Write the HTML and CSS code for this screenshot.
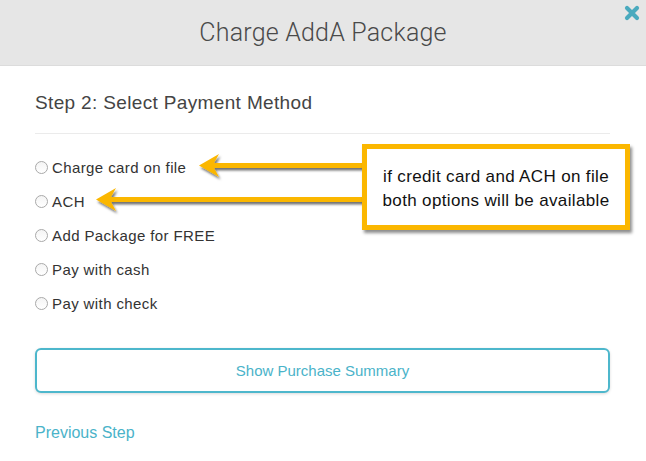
FILE: index.html
```html
<!DOCTYPE html>
<html>
<head>
<meta charset="utf-8">
<link rel="stylesheet" href="styles.css">
</head>
<body>
<div class="modal">
  <div class="modal-header">
    <h1 class="modal-title">Charge AddA Package</h1>
    <span class="close" aria-label="close">
      <svg width="16" height="16" viewBox="0 0 16 16"><path d="M3 3 L13 13 M13 3 L3 13" stroke="#4aaabe" stroke-width="4.2" stroke-linecap="round"/></svg>
    </span>
  </div>
  <div class="modal-body">
    <h2 class="step-title">Step 2: Select Payment Method</h2>
    <ul class="options">
      <li class="option"><span class="radio"></span>Charge card on file</li>
      <li class="option"><span class="radio"></span>ACH</li>
      <li class="option"><span class="radio"></span>Add Package for FREE</li>
      <li class="option"><span class="radio"></span>Pay with cash</li>
      <li class="option"><span class="radio"></span>Pay with check</li>
    </ul>
    <button class="summary-btn">Show Purchase Summary</button>
    <a class="prev-link" href="#">Previous Step</a>
  </div>

  <svg class="arrows" width="646" height="461" viewBox="0 0 646 461">
    <defs>
      <filter id="sh" x="-10%" y="-50%" width="120%" height="200%">
        <feDropShadow dx="1.5" dy="2.5" stdDeviation="1" flood-color="#000" flood-opacity="0.55"/>
      </filter>
    </defs>
    <g filter="url(#sh)" fill="#fbb700">
      <path d="M199 165.5 L219 154 L214 163 L364 163 L364 168 L214 168 L219 177 Z"/>
      <path d="M96 199.5 L116 188 L111 197 L364 197 L364 202 L111 202 L116 211 Z"/>
    </g>
  </svg>
  <div class="callout">
    <p>if credit card and ACH on file<br>both options will be available</p>
  </div>
</div>
</body>
</html>
```
FILE: styles.css
```css
* { box-sizing: border-box; }
html, body { margin: 0; padding: 0; background: #fff; }
body { width: 646px; height: 461px; overflow: hidden; font-family: "Liberation Sans", Arial, sans-serif; }

.modal { position: relative; width: 646px; height: 461px; background: #fff; }

.modal-header {
  height: 66px;
  background: #e6e6e6;
  border-bottom: 1px solid #dcdcdc;
  display: flex;
  align-items: center;
  justify-content: center;
  position: relative;
}
.modal-title {
  margin: 0;
  font-family: Roboto, "Liberation Sans", sans-serif;
  font-weight: 300;
  font-size: 25px;
  color: #4a4a4a;
  letter-spacing: 0.2px;
}
.close { position: absolute; top: 5px; right: 6px; width: 16px; height: 16px; }
.close svg { display: block; }

.modal-body { padding: 25px 36px 0 35px; }

.step-title {
  margin: 0;
  font-family: "Liberation Sans", Arial, sans-serif;
  font-weight: normal;
  font-size: 19px;
  letter-spacing: 0.35px;
  line-height: 24px;
  color: #444;
  padding-bottom: 18px;
  border-bottom: 1px solid #ebebeb;
}

.options { list-style: none; margin: 16px 0 0 0; padding: 0; }
.option {
  height: 34px;
  display: flex;
  align-items: center;
  font-size: 15px;
  letter-spacing: 0.4px;
  color: #333;
}
.radio {
  width: 13px;
  height: 13px;
  border-radius: 50%;
  border: 1px solid #a9a9a9;
  background: linear-gradient(#f4f4f4, #fff);
  margin: 0 4px 0 0;
  flex: none;
}

.summary-btn {
  display: block;
  width: 575px;
  height: 45px;
  margin-top: 28px;
  background: #fff;
  border: 2px solid #4db7cc;
  border-radius: 6px;
  box-shadow: 0 1px 3px rgba(0,0,0,0.15);
  color: #4ab3c9;
  font-family: "Liberation Sans", Arial, sans-serif;
  font-size: 15px;
}

.prev-link {
  display: block;
  margin-top: 30px;
  line-height: 20px;
  font-size: 16px;
  color: #4ab3c9;
  text-decoration: none;
}

.arrows { position: absolute; left: 0; top: 0; pointer-events: none; }

.callout {
  position: absolute;
  left: 362px;
  top: 144px;
  width: 268px;
  height: 86px;
  padding-top: 4px;
  border: 5px solid #fbb700;
  background: #fff;
  box-shadow: 2px 3px 3px rgba(0,0,0,0.45);
  display: flex;
  align-items: center;
  justify-content: center;
}
.callout p {
  margin: 0;
  text-align: center;
  font-family: "Liberation Sans", Arial, sans-serif;
  font-size: 17px;
  letter-spacing: 0.35px;
  line-height: 24px;
  color: #111;
}
```
